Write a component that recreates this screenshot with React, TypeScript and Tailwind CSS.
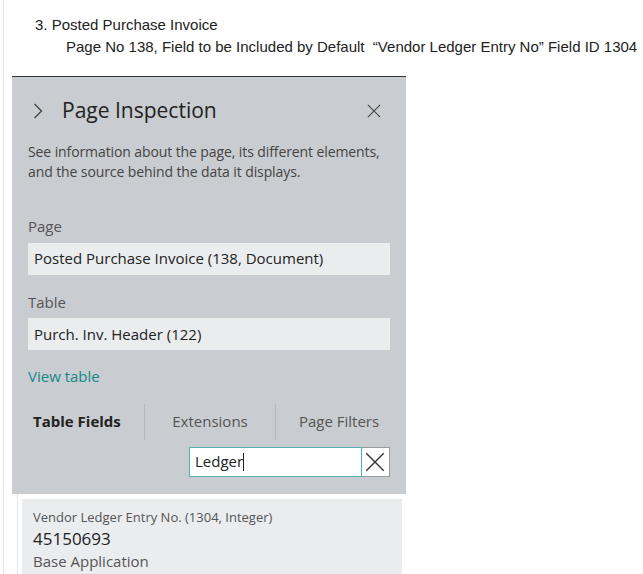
import React from 'react';

const ui = { fontFamily: "'Open Sans', 'Noto Sans', sans-serif" };

const Chevron: React.FC = () => (
  <svg width="10" height="16" viewBox="0 0 10 16" fill="none" stroke="#444" strokeWidth="1.3">
    <path d="M1.5 1 L8.5 8 L1.5 15" />
  </svg>
);

const Cross: React.FC<{ size: number; color?: string; width?: number }> = ({ size, color = '#444', width = 1.3 }) => (
  <svg width={size} height={size} viewBox="0 0 16 16" fill="none" stroke={color} strokeWidth={width}>
    <path d="M1 1 L15 15 M15 1 L1 15" />
  </svg>
);

export default function App() {
  return (
    <div className="w-[643px] h-[574px] bg-white overflow-hidden flex">
      <div className="w-[3px]" />
      <div className="w-px bg-[#e3e3e3] h-full" />
      <div className="flex-1 flex flex-col">
        {/* Document text */}
        <div className="pt-[14px] pl-[31px] text-[15px] leading-[22px] text-[#222]" style={{ fontFamily: "'Liberation Sans', Arial, sans-serif" }}>
          <div>3. Posted Purchase Invoice</div>
          <div className="pl-[31px] whitespace-nowrap">Page No 138, Field to be Included by Default&nbsp; “Vendor Ledger Entry No” Field ID 1304</div>
        </div>

        {/* Page Inspection panel */}
        <div className="ml-[8px] mt-[18px] w-[394px] border-t-[1.5px] border-[#333]" style={ui}>
          <div className="bg-[#c9ccd0] px-[16px] pb-[17px]">
            <div className="flex items-center h-[65px] pt-[2px]">
              <div className="pl-[5px] w-[34px]"><Chevron /></div>
              <div className="flex-1 text-[21px] text-[#222]">Page Inspection</div>
              <div className="pr-[9px]"><Cross size={14} /></div>
            </div>
            <div className="text-[14px] leading-[20px] text-[#444] whitespace-nowrap tracking-[-0.1px]">
              See information about the page, its different elements,<br />and the source behind the data it displays.
            </div>

            <div className="mt-[33px] text-[15px] text-[#555]">Page</div>
            <div className="mt-[5px] h-[32px] bg-[#ebecee] px-[6px] flex items-center text-[15px] text-[#222]">
              Posted Purchase Invoice (138, Document)
            </div>

            <div className="mt-[16px] text-[15px] text-[#555]">Table</div>
            <div className="mt-[5px] h-[32px] bg-[#ebecee] px-[6px] flex items-center text-[15px] text-[#222]">
              Purch. Inv. Header (122)
            </div>

            <div className="mt-[15px] text-[15px] text-[#17888a]">View table</div>

            <div className="mt-[16px] flex h-[36px] items-stretch text-[15px]">
              <div className="w-[116px] flex items-center pl-[5px] font-bold text-[#222]">Table Fields</div>
              <div className="w-px bg-[#b3b6ba]" />
              <div className="w-[130px] flex items-center justify-center text-[#555]">Extensions</div>
              <div className="w-px bg-[#b3b6ba]" />
              <div className="flex-1 flex items-center justify-center pl-[12px] text-[#555]">Page Filters</div>
            </div>

            <div className="mt-[7px] flex justify-end">
              <div className="flex h-[30px] bg-white border border-[#9a9a9a]">
                <div className="w-[173px] border border-[#55aeb0] -m-px flex items-center pl-[5px] text-[15px] text-[#222]">
                  Ledger<span className="inline-block w-px h-[18px] bg-[#222]" />
                </div>
                <div className="w-[28px] flex items-center justify-center"><Cross size={20} color="#333" width={1.1} /></div>
              </div>
            </div>
          </div>
        </div>

        {/* Result list */}
        <div className="ml-[13px] w-[385px] flex-1 border-l border-[#e4e4e4] pt-[5px] pl-[4px]" style={ui}>
          <div className="bg-[#ebecee] px-[11px] pt-[9px] pb-[10px]">
            <div className="text-[13px] leading-[19px] text-[#555]">Vendor Ledger Entry No. (1304, Integer)</div>
            <div className="text-[17px] leading-[24px] text-[#222]">45150693</div>
            <div className="text-[15px] leading-[20px] text-[#555]">Base Application</div>
          </div>
        </div>
      </div>
    </div>
  );
}
